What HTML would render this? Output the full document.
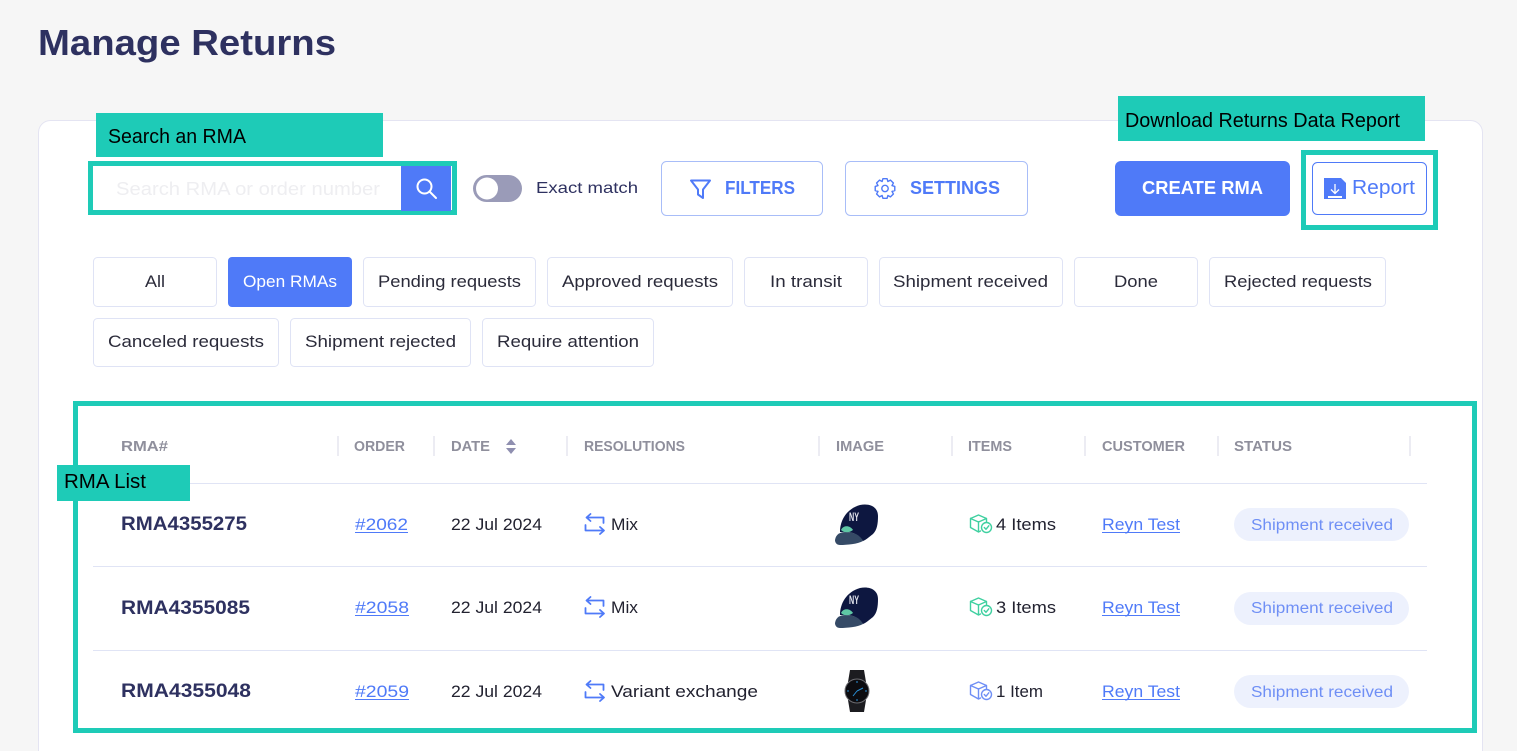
<!DOCTYPE html>
<html lang="en">
<head>
<meta charset="utf-8">
<title>Manage Returns</title>
<style>
html,body{margin:0;padding:0;width:1517px;height:751px;overflow:hidden;background:#f6f6f6}
svg{display:block}
text{font-family:"Liberation Sans",Arial,sans-serif}
.p{font-size:17px;fill:#2b2b3a}
.h{font-size:14.5px;font-weight:700;fill:#8f8f9c}
.r{font-size:19px;font-weight:700;fill:#2e3160}
.b{font-size:17px;fill:#222230}
.l{font-size:17px;fill:#4f7af8}
.s{font-size:15.5px;fill:#6f8ff5}
.t{font-size:20px;fill:#000}
.u{fill:#4f7af8}
</style>
</head>
<body>
<svg xmlns="http://www.w3.org/2000/svg" width="1517" height="751" viewBox="0 0 1517 751">
<defs>
<g id="sw" fill="none" stroke="#4f7af8" stroke-width="1.800" stroke-linecap="round" stroke-linejoin="round">
<path d="M6.500 2 2.500 5.500 6.500 9M3 5.500H19.500V11M1.500 13V18.500H19M16 15 20 18.500 16 22"/>
</g>
<g id="box" fill="none" stroke-width="1.400" stroke-linejoin="round" stroke-linecap="round">
<path d="M1 4.500 9 1 17 4.500V8.500M1 4.500V13.500L9 18 11 17M1 4.500 9 8 17 4.500M9 8V18"/>
<circle cx="17" cy="13.500" r="5" fill="#fff"/>
<path d="M14.800 13.500 16.500 15.300 19.300 11.800"/>
</g>
<g id="cap">
<path d="M5 28C5 17 11 5 25 1 35-1 43 3 43 12 43 20 42 26 38 30 34 33 31 36 28 37 24 31 18 28 12 28Z" fill="#0d1740"/>
<path d="M0 36C1 30 5 28 11 28 19 28 25 31 28 37 23 40 12 41 5 41 2 41 0 39 0 36Z" fill="#354a66"/>
<path d="M6 26C8 21 15 21 18 26 14 29 9 29 6 26Z" fill="#5fc7a5"/>
<text x="14" y="17" font-size="12" font-weight="700" fill="#e6e8f0" textLength="10" lengthAdjust="spacingAndGlyphs">NY</text>
</g>
</defs>

<rect width="1517" height="751" fill="#f6f6f6"/>
<text x="38" y="55" font-size="36" font-weight="700" fill="#2e3160" textLength="298" lengthAdjust="spacingAndGlyphs">Manage Returns</text>

<rect x="38.500" y="120.500" width="1444" height="660" rx="12" fill="#fff" stroke="#e4e4f2"/>

<!-- Search -->
<rect x="90.500" y="163.500" width="364" height="49" fill="#fff" stroke="#1ecbb7" stroke-width="5"/>
<rect x="401" y="166" width="50" height="45" fill="#4f7af8"/>
<rect x="96" y="113" width="287" height="44" fill="#1ecbb7"/>
<text x="108" y="143" class="t" textLength="138" lengthAdjust="spacingAndGlyphs">Search an RMA</text>
<text x="116" y="195" font-size="18" fill="#eeeef1" textLength="264" lengthAdjust="spacingAndGlyphs">Search RMA or order number</text>
<circle cx="424.500" cy="186.500" r="7" fill="none" stroke="#fff" stroke-width="2"/>
<path d="M429.500 191.500 436 198" stroke="#fff" stroke-width="2" stroke-linecap="round"/>

<!-- Toggle -->
<rect x="473" y="175" width="49" height="27" rx="13.500" fill="#9a9bb8"/>
<circle cx="487" cy="188.500" r="11" fill="#fff"/>
<text x="536" y="193" font-size="16" fill="#2e3160" textLength="102" lengthAdjust="spacingAndGlyphs">Exact match</text>

<!-- Filters -->
<rect x="661.500" y="161.500" width="161" height="54" rx="5" fill="#fff" stroke="#a8bdf8"/>
<path d="M691 180.500H710L703 189.500V198L698 194.500V189.500Z" fill="none" stroke="#4f7af8" stroke-width="2" stroke-linejoin="round"/>
<text x="725" y="194" font-size="18" font-weight="700" fill="#4f7af8" textLength="70" lengthAdjust="spacingAndGlyphs">FILTERS</text>

<!-- Settings -->
<rect x="845.500" y="161.500" width="182" height="54" rx="5" fill="#fff" stroke="#a8bdf8"/>
<g transform="translate(885 188.500)" fill="none" stroke="#4f7af8" stroke-width="1.400" stroke-linejoin="round">
<circle r="3.200"/>
<path d="M2.080-9.780 2.900-7 5.450-8.390 8.390-5.450 7-2.900 9.780-2.080V2.080L7 2.900 8.390 5.450 5.450 8.390 2.900 7 2.080 9.780H-2.080L-2.900 7-5.450 8.390-8.390 5.450-7 2.900-9.780 2.080V-2.080L-7-2.900-8.390-5.450-5.450-8.390-2.900-7-2.080-9.780Z"/>
</g>
<text x="910" y="194" font-size="18" font-weight="700" fill="#4f7af8" textLength="90" lengthAdjust="spacingAndGlyphs">SETTINGS</text>

<!-- Create RMA -->
<rect x="1115" y="161" width="175" height="55" rx="6" fill="#4f7af8"/>
<text x="1142" y="194" font-size="18" font-weight="700" fill="#fff" textLength="121" lengthAdjust="spacingAndGlyphs">CREATE RMA</text>

<!-- Report -->
<rect x="1303.500" y="152.500" width="132" height="75" fill="#fff" stroke="#1ecbb7" stroke-width="5"/>
<rect x="1312.500" y="162.500" width="114" height="52" rx="5" fill="#fff" stroke="#4f7af8"/>
<path d="M1324 178H1341L1346 183V199H1324Z" fill="#4f7af8"/>
<path d="M1335 184V193M1331 189.500 1335 193.500 1339 189.500" fill="none" stroke="#fff" stroke-width="1.300"/>
<rect x="1328" y="196" width="14" height="2" fill="#fff"/>
<text x="1352" y="194" font-size="20" fill="#4f7af8" textLength="63" lengthAdjust="spacingAndGlyphs">Report</text>
<rect x="1118" y="96" width="307" height="45" fill="#1ecbb7"/>
<text x="1125" y="127" class="t" textLength="275" lengthAdjust="spacingAndGlyphs">Download Returns Data Report</text>

<!-- Pills -->
<g fill="#fff" stroke="#dfe3f5">
<rect x="93.500" y="257.500" width="123" height="49" rx="4"/>
<rect x="363.500" y="257.500" width="172" height="49" rx="4"/>
<rect x="547.500" y="257.500" width="185" height="49" rx="4"/>
<rect x="744.500" y="257.500" width="123" height="49" rx="4"/>
<rect x="879.500" y="257.500" width="183" height="49" rx="4"/>
<rect x="1074.500" y="257.500" width="123" height="49" rx="4"/>
<rect x="1209.500" y="257.500" width="176" height="49" rx="4"/>
<rect x="93.500" y="318.500" width="185" height="48" rx="4"/>
<rect x="290.500" y="318.500" width="180" height="48" rx="4"/>
<rect x="482.500" y="318.500" width="171" height="48" rx="4"/>
</g>
<rect x="228" y="257" width="124" height="50" rx="4" fill="#4f7af8"/>
<text x="145" y="287" class="p" textLength="20" lengthAdjust="spacingAndGlyphs">All</text>
<text x="243" y="287" class="p" style="fill:#fff" textLength="94" lengthAdjust="spacingAndGlyphs">Open RMAs</text>
<text x="378" y="287" class="p" textLength="143" lengthAdjust="spacingAndGlyphs">Pending requests</text>
<text x="562" y="287" class="p" textLength="156" lengthAdjust="spacingAndGlyphs">Approved requests</text>
<text x="770" y="287" class="p" textLength="72" lengthAdjust="spacingAndGlyphs">In transit</text>
<text x="893" y="287" class="p" textLength="155" lengthAdjust="spacingAndGlyphs">Shipment received</text>
<text x="1114" y="287" class="p" textLength="44" lengthAdjust="spacingAndGlyphs">Done</text>
<text x="1224" y="287" class="p" textLength="148" lengthAdjust="spacingAndGlyphs">Rejected requests</text>
<text x="108" y="347" class="p" textLength="156" lengthAdjust="spacingAndGlyphs">Canceled requests</text>
<text x="305" y="347" class="p" textLength="151" lengthAdjust="spacingAndGlyphs">Shipment rejected</text>
<text x="497" y="347" class="p" textLength="142" lengthAdjust="spacingAndGlyphs">Require attention</text>

<!-- Table frame -->
<rect x="75.500" y="403.500" width="1399" height="327" fill="#fff" stroke="#1ecbb7" stroke-width="5"/>

<!-- Table header -->
<text x="121" y="451" class="h" textLength="47" lengthAdjust="spacingAndGlyphs">RMA#</text>
<text x="354" y="451" class="h" textLength="51" lengthAdjust="spacingAndGlyphs">ORDER</text>
<text x="451" y="451" class="h" textLength="39" lengthAdjust="spacingAndGlyphs">DATE</text>
<text x="584" y="451" class="h" textLength="101" lengthAdjust="spacingAndGlyphs">RESOLUTIONS</text>
<text x="836" y="451" class="h" textLength="48" lengthAdjust="spacingAndGlyphs">IMAGE</text>
<text x="968" y="451" class="h" textLength="44" lengthAdjust="spacingAndGlyphs">ITEMS</text>
<text x="1102" y="451" class="h" textLength="83" lengthAdjust="spacingAndGlyphs">CUSTOMER</text>
<text x="1234" y="451" class="h" textLength="58" lengthAdjust="spacingAndGlyphs">STATUS</text>
<path d="M511 439 516 445H506ZM511 454 516 448H506Z" fill="#8f8fb0"/>
<g fill="#ececf3">
<rect x="337" y="436" width="2" height="20"/>
<rect x="433" y="436" width="2" height="20"/>
<rect x="566" y="436" width="2" height="20"/>
<rect x="818" y="436" width="2" height="20"/>
<rect x="951" y="436" width="2" height="20"/>
<rect x="1084" y="436" width="2" height="20"/>
<rect x="1217" y="436" width="2" height="20"/>
<rect x="1409" y="436" width="2" height="20"/>
</g>
<g fill="#e0e4f5">
<rect x="93" y="483" width="1334" height="1"/>
<rect x="93" y="566" width="1334" height="1"/>
<rect x="93" y="650" width="1334" height="1"/>
</g>

<!-- Row 1 -->
<text x="121" y="530" class="r" textLength="126" lengthAdjust="spacingAndGlyphs">RMA4355275</text>
<text x="355" y="530" class="l" textLength="53" lengthAdjust="spacingAndGlyphs">#2062</text>
<rect x="355" y="532" width="53" height="1" class="u"/>
<text x="451" y="530" class="b" textLength="91" lengthAdjust="spacingAndGlyphs">22 Jul 2024</text>
<use href="#sw" x="584" y="512"/>
<text x="611" y="530" class="b" textLength="27" lengthAdjust="spacingAndGlyphs">Mix</text>
<use href="#cap" x="835" y="504"/>
<use href="#box" x="969.500" y="514" stroke="#3fd0a0"/>
<text x="996" y="530" class="b" textLength="60" lengthAdjust="spacingAndGlyphs">4 Items</text>
<text x="1102" y="530" class="l" textLength="78" lengthAdjust="spacingAndGlyphs">Reyn Test</text>
<rect x="1102" y="532" width="78" height="1" class="u"/>
<rect x="1234" y="508" width="175" height="33" rx="16.500" fill="#edf1fd"/>
<text x="1251" y="530" class="s" textLength="142" lengthAdjust="spacingAndGlyphs">Shipment received</text>

<!-- Row 2 -->
<text x="121" y="614" class="r" textLength="129" lengthAdjust="spacingAndGlyphs">RMA4355085</text>
<text x="355" y="613" class="l" textLength="54" lengthAdjust="spacingAndGlyphs">#2058</text>
<rect x="355" y="615" width="54" height="1" class="u"/>
<text x="451" y="613" class="b" textLength="91" lengthAdjust="spacingAndGlyphs">22 Jul 2024</text>
<use href="#sw" x="584" y="595"/>
<text x="611" y="613" class="b" textLength="27" lengthAdjust="spacingAndGlyphs">Mix</text>
<use href="#cap" x="835" y="587"/>
<use href="#box" x="969.500" y="597" stroke="#3fd0a0"/>
<text x="996" y="613" class="b" textLength="60" lengthAdjust="spacingAndGlyphs">3 Items</text>
<text x="1102" y="613" class="l" textLength="78" lengthAdjust="spacingAndGlyphs">Reyn Test</text>
<rect x="1102" y="615" width="78" height="1" class="u"/>
<rect x="1234" y="592" width="175" height="33" rx="16.500" fill="#edf1fd"/>
<text x="1251" y="613" class="s" textLength="142" lengthAdjust="spacingAndGlyphs">Shipment received</text>

<!-- Row 3 -->
<text x="121" y="697" class="r" textLength="130" lengthAdjust="spacingAndGlyphs">RMA4355048</text>
<text x="355" y="697" class="l" textLength="54" lengthAdjust="spacingAndGlyphs">#2059</text>
<rect x="355" y="699" width="54" height="1" class="u"/>
<text x="451" y="697" class="b" textLength="91" lengthAdjust="spacingAndGlyphs">22 Jul 2024</text>
<use href="#sw" x="584" y="679"/>
<text x="611" y="697" class="b" textLength="147" lengthAdjust="spacingAndGlyphs">Variant exchange</text>
<path d="M850 670H864L866 682H848ZM848 700H866L864 712H850Z" fill="#1c1c20"/>
<circle cx="857" cy="691" r="12" fill="#0c0c10" stroke="#6d6d72" stroke-width="1"/>
<path d="M857 691 863 688M857 691 853 696" stroke="#2a8fd6" stroke-width="1"/>
<path d="M857 681V683M857 699V701M847 691H849M865 691H867" stroke="#2a8fd6" stroke-width="1"/>
<use href="#box" x="969.500" y="681" stroke="#6f8ff5"/>
<text x="996" y="697" class="b" textLength="47" lengthAdjust="spacingAndGlyphs">1 Item</text>
<text x="1102" y="697" class="l" textLength="78" lengthAdjust="spacingAndGlyphs">Reyn Test</text>
<rect x="1102" y="699" width="78" height="1" class="u"/>
<rect x="1234" y="675" width="175" height="33" rx="16.500" fill="#edf1fd"/>
<text x="1251" y="697" class="s" textLength="142" lengthAdjust="spacingAndGlyphs">Shipment received</text>

<!-- RMA List label -->
<rect x="57" y="465" width="133" height="36" fill="#1ecbb7"/>
<text x="64" y="488" class="t" textLength="82" lengthAdjust="spacingAndGlyphs">RMA List</text>
</svg>
</body>
</html>
